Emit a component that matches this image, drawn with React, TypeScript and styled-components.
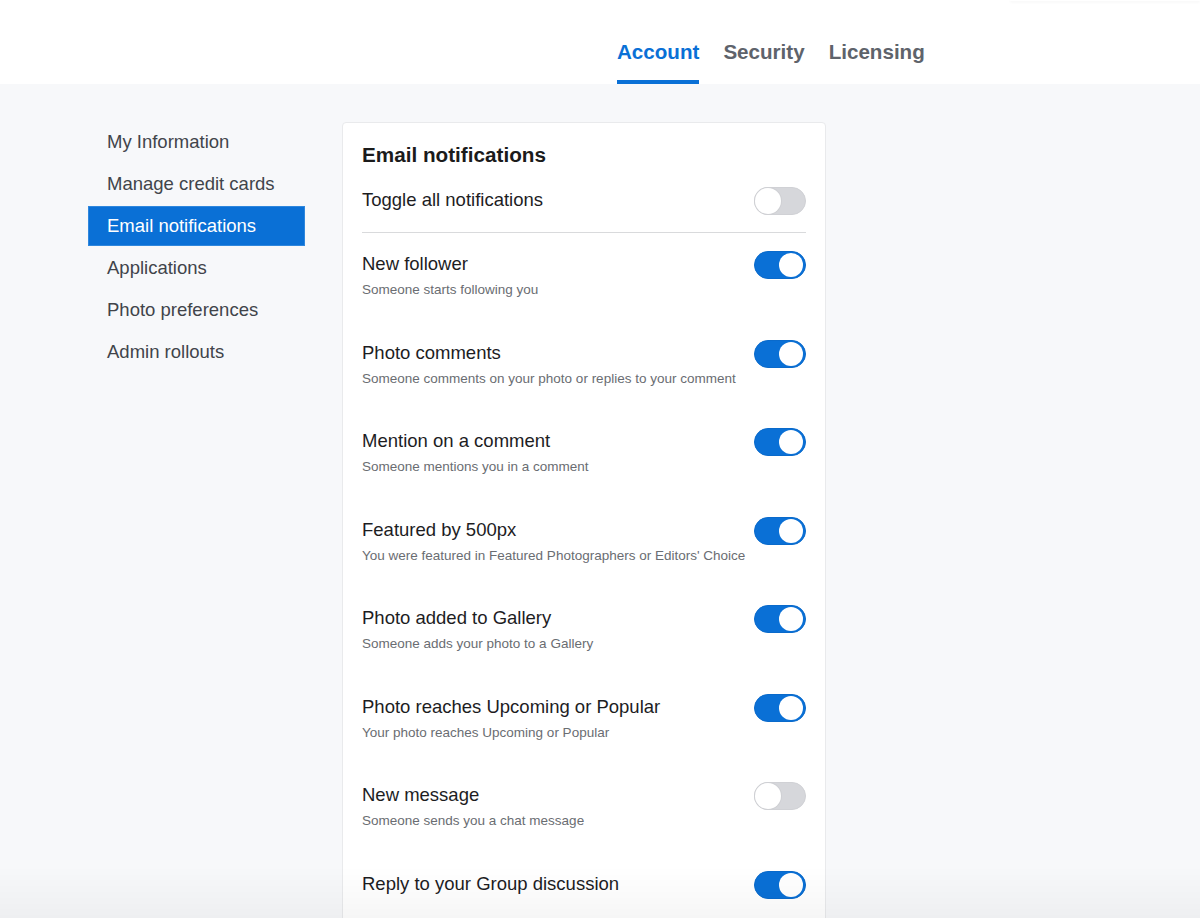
import React from "react";
import styled, { createGlobalStyle } from "styled-components";

const Global = createGlobalStyle`
  html, body { margin: 0; padding: 0; background: #f7f8fa; }
  body { font-family: "Liberation Sans", Arial, Helvetica, sans-serif; -webkit-font-smoothing: antialiased; }
  * { box-sizing: border-box; }
`;

const Page = styled.div`
  min-height: 100vh;
  background: #f7f8fa;
  position: relative;
`;

const Header = styled.header`
  position: relative;
  height: 84px;
  background: #ffffff;
  display: flex;
  align-items: flex-end;
  padding-left: 617px;
`;

const TopEdge = styled.div`
  position: absolute;
  top: 0;
  right: 0;
  width: 190px;
  height: 1px;
  background: #fff;
  box-shadow: 0 1px 3px rgba(0, 0, 0, 0.08);
`;

const Tabs = styled.nav`
  display: flex;
  gap: 24px;
`;

const Tab = styled.div<{ $active?: boolean }>`
  font-size: 20.6px;
  font-weight: 700;
  line-height: 24px;
  padding-bottom: 16px;
  border-bottom: 4px solid ${(p) => (p.$active ? "#0a70d6" : "transparent")};
  color: ${(p) => (p.$active ? "#0a70d6" : "#5e636b")};
`;

const Body = styled.div`
  display: flex;
  align-items: flex-start;
  padding: 37px 0 0 88px;
  gap: 37px;
`;

const Sidebar = styled.nav`
  width: 217px;
  padding-top: 1px;
  display: flex;
  flex-direction: column;
  gap: 2px;
`;

const SideItem = styled.div<{ $active?: boolean }>`
  height: 40px;
  display: flex;
  align-items: center;
  padding-left: 18px;
  font-size: 18.5px;
  color: ${(p) => (p.$active ? "#ffffff" : "#41444a")};
  background: ${(p) => (p.$active ? "#0a70d6" : "transparent")};
  border: 1px solid ${(p) => (p.$active ? "#2f87dd" : "transparent")};
`;

const Card = styled.section`
  width: 484px;
  margin-top: 1px;
  background: #ffffff;
  border: 1px solid #e9eaec;
  border-radius: 4px;
  padding: 20px 19px 40px 19px;
`;

const Heading = styled.h2`
  margin: 0;
  font-size: 20.7px;
  line-height: 24px;
  font-weight: 700;
  color: #1b1b1b;
`;

const ToggleAllRow = styled.div`
  margin-top: 20px;
  padding-bottom: 17px;
  border-bottom: 1px solid #d9dadc;
  display: flex;
  align-items: center;
  justify-content: space-between;
`;

const ToggleAllLabel = styled.div`
  font-size: 18.5px;
  line-height: 22px;
  color: #1d1d1f;
  margin-top: -2px;
`;

const Row = styled.div`
  display: flex;
  justify-content: space-between;
  align-items: flex-start;
  padding: 20px 0 22.5px;
`;

const Texts = styled.div`
  display: flex;
  flex-direction: column;
  gap: 6px;
`;

const Title = styled.div`
  font-size: 18.5px;
  line-height: 22px;
  color: #1d1d1f;
`;

const Desc = styled.div`
  font-size: 13.5px;
  line-height: 18px;
  color: #6a6d72;
`;

const Switch = styled.div<{ $on?: boolean; $shift?: number }>`
  position: relative;
  flex: none;
  width: 52px;
  height: 28px;
  margin-top: ${(p) => p.$shift ?? 0}px;
  border-radius: 14px;
  background: ${(p) => (p.$on ? "#0a70d6" : "#d6d7db")};
  border: 1px solid ${(p) => (p.$on ? "#0a6acb" : "#d0d1d5")};
`;

const Knob = styled.div<{ $on?: boolean }>`
  position: absolute;
  top: ${(p) => (p.$on ? "1px" : "0px")};
  left: ${(p) => (p.$on ? "24px" : "0px")};
  width: ${(p) => (p.$on ? "24px" : "26px")};
  height: ${(p) => (p.$on ? "24px" : "26px")};
  border-radius: 50%;
  background: #ffffff;
  box-shadow: ${(p) => (p.$on ? "none" : "0 0 0 1px #cfd0d4")};
`;

const Fade = styled.div`
  position: fixed;
  left: 0;
  right: 0;
  bottom: 0;
  height: 52px;
  pointer-events: none;
  background: linear-gradient(to bottom, rgba(0, 0, 0, 0), rgba(0, 0, 0, 0.035));
`;

const Toggle = ({ on, shift }: { on: boolean; shift?: number }) => (
  <Switch $on={on} $shift={shift}>
    <Knob $on={on} />
  </Switch>
);

const side = [
  "My Information",
  "Manage credit cards",
  "Email notifications",
  "Applications",
  "Photo preferences",
  "Admin rollouts",
];

const rows: { title: string; desc?: string; on: boolean }[] = [
  { title: "New follower", desc: "Someone starts following you", on: true },
  { title: "Photo comments", desc: "Someone comments on your photo or replies to your comment", on: true },
  { title: "Mention on a comment", desc: "Someone mentions you in a comment", on: true },
  { title: "Featured by 500px", desc: "You were featured in Featured Photographers or Editors' Choice", on: true },
  { title: "Photo added to Gallery", desc: "Someone adds your photo to a Gallery", on: true },
  { title: "Photo reaches Upcoming or Popular", desc: "Your photo reaches Upcoming or Popular", on: true },
  { title: "New message", desc: "Someone sends you a chat message", on: false },
  { title: "Reply to your Group discussion", on: true },
];

export default function App() {
  return (
    <Page>
      <Global />
      <Header>
        <TopEdge />
        <Tabs>
          <Tab $active>Account</Tab>
          <Tab>Security</Tab>
          <Tab>Licensing</Tab>
        </Tabs>
      </Header>
      <Body>
        <Sidebar>
          {side.map((s) => (
            <SideItem key={s} $active={s === "Email notifications"}>
              {s}
            </SideItem>
          ))}
        </Sidebar>
        <Card>
          <Heading>Email notifications</Heading>
          <ToggleAllRow>
            <ToggleAllLabel>Toggle all notifications</ToggleAllLabel>
            <Toggle on={false} />
          </ToggleAllRow>
          {rows.map((r) => (
            <Row key={r.title}>
              <Texts>
                <Title>{r.title}</Title>
                {r.desc && <Desc>{r.desc}</Desc>}
              </Texts>
              <Toggle on={r.on} shift={-2} />
            </Row>
          ))}
        </Card>
      </Body>
      <Fade />
    </Page>
  );
}
